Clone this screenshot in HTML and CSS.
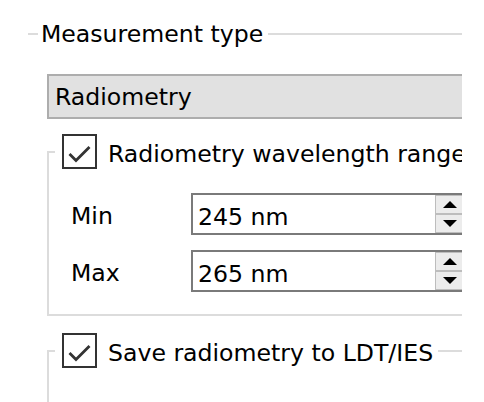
FILE: index.html
```html
<!DOCTYPE html>
<html>
<head>
<meta charset="utf-8">
<link rel="stylesheet" href="styles.css">
</head>
<body>
<div class="panel">
  <div class="title-row">
    <span class="stub"></span>
    <span class="title">Measurement type</span>
    <span class="rule"></span>
  </div>
  <div class="combo">Radiometry</div>

  <div class="group">
    <div class="group-head">
      <span class="corner"></span>
      <span class="check"><svg viewBox="0 0 31 31" width="31" height="31"><polyline points="5.5,18 12,24.5 25.5,11" fill="none" stroke="#333" stroke-width="2.8"/></svg></span>
      <span class="head-text">Radiometry wavelength range</span>
      <span class="head-rule"></span>
    </div>
    <div class="group-body">
      <div class="field">
        <span class="label">Min</span>
        <div class="spin">
          <span class="value">245 nm</span>
          <span class="spin-btns"><span class="btn"><span class="arrow-up"></span></span><span class="btn"><span class="arrow-down"></span></span></span>
        </div>
      </div>
      <div class="field">
        <span class="label">Max</span>
        <div class="spin">
          <span class="value">265 nm</span>
          <span class="spin-btns"><span class="btn"><span class="arrow-up"></span></span><span class="btn"><span class="arrow-down"></span></span></span>
        </div>
      </div>
    </div>
  </div>

  <div class="group group-last">
    <div class="group-head">
      <span class="corner"></span>
      <span class="check"><svg viewBox="0 0 31 31" width="31" height="31"><polyline points="5.5,18 12,24.5 25.5,11" fill="none" stroke="#333" stroke-width="2.8"/></svg></span>
      <span class="head-text">Save radiometry to LDT/IES</span>
      <span class="head-rule"></span>
    </div>
    <div class="group-body open"></div>
  </div>
</div>
</body>
</html>
```

FILE: styles.css
```css
html, body {
  margin: 0;
  padding: 0;
  background: #ffffff;
}

body {
  font-family: "DejaVu Sans", "Verdana", sans-serif;
  font-size: 23.6px;
  line-height: 28px;
  color: #000000;
}

.panel {
  width: 462px;
  height: 402px;
  overflow: hidden;
  padding-top: 20px;
  box-sizing: border-box;
}

.title-row {
  display: flex;
  align-items: center;
  height: 28px;
  padding-left: 28px;
}

.stub {
  width: 10px;
  height: 2px;
  background: #dcdcdc;
  flex: none;
}

.title {
  margin: 0 5px 0 3px;
  white-space: nowrap;
  flex: none;
}

.rule {
  flex: 1;
  height: 2px;
  background: #dcdcdc;
}

.combo {
  margin: 26px 0 0 47px;
  width: 500px;
  height: 45px;
  box-sizing: border-box;
  border: 2px solid #adadad;
  background: #e1e1e1;
  padding: 7px 0 0 6px;
  white-space: nowrap;
}

.group {
  margin: 15px 0 0 47px;
}

.group-last {
  margin-top: 17px;
}

.group-head {
  display: flex;
  height: 35px;
}

.corner {
  flex: none;
  width: 8px;
  height: 18px;
  margin-top: 17px;
  box-sizing: border-box;
  border-top: 2px solid #dcdcdc;
  border-left: 2px solid #dcdcdc;
}

.check {
  flex: none;
  width: 35px;
  height: 35px;
  margin-left: 7px;
  box-sizing: border-box;
  border: 2px solid #333333;
  background: #ffffff;
}

.check svg {
  display: block;
}

.head-text {
  flex: none;
  white-space: nowrap;
  margin-left: 11px;
  padding-top: 6px;
}

.head-rule {
  flex: 1;
  height: 2px;
  margin: 17px 0 0 5px;
  background: #dcdcdc;
}

.group-body {
  border-left: 2px solid #dcdcdc;
  border-bottom: 2px solid #dcdcdc;
  padding: 24px 0 22px 22px;
}

.group-body.open {
  border-bottom: none;
  height: 40px;
  padding: 0;
}

.field {
  display: flex;
  height: 42px;
}

.field + .field {
  margin-top: 15px;
}

.label {
  flex: none;
  width: 120px;
  padding-top: 9px;
}

.spin {
  flex: none;
  width: 275px;
  height: 42px;
  box-sizing: border-box;
  border: 2px solid #7a7a7a;
  background: #ffffff;
  display: flex;
}

.value {
  flex: 1;
  padding: 8px 0 0 5px;
  white-space: nowrap;
}

.spin-btns {
  flex: none;
  width: 29px;
  display: flex;
  flex-direction: column;
}

.btn {
  flex: 1;
  box-sizing: border-box;
  border: 1px solid #bdbdbd;
  background: #ececec;
  display: flex;
  align-items: center;
  justify-content: center;
}

.arrow-up {
  width: 0;
  height: 0;
  border-left: 7px solid transparent;
  border-right: 7px solid transparent;
  border-bottom: 7px solid #000000;
}

.arrow-down {
  width: 0;
  height: 0;
  border-left: 7px solid transparent;
  border-right: 7px solid transparent;
  border-top: 7px solid #000000;
}
```
